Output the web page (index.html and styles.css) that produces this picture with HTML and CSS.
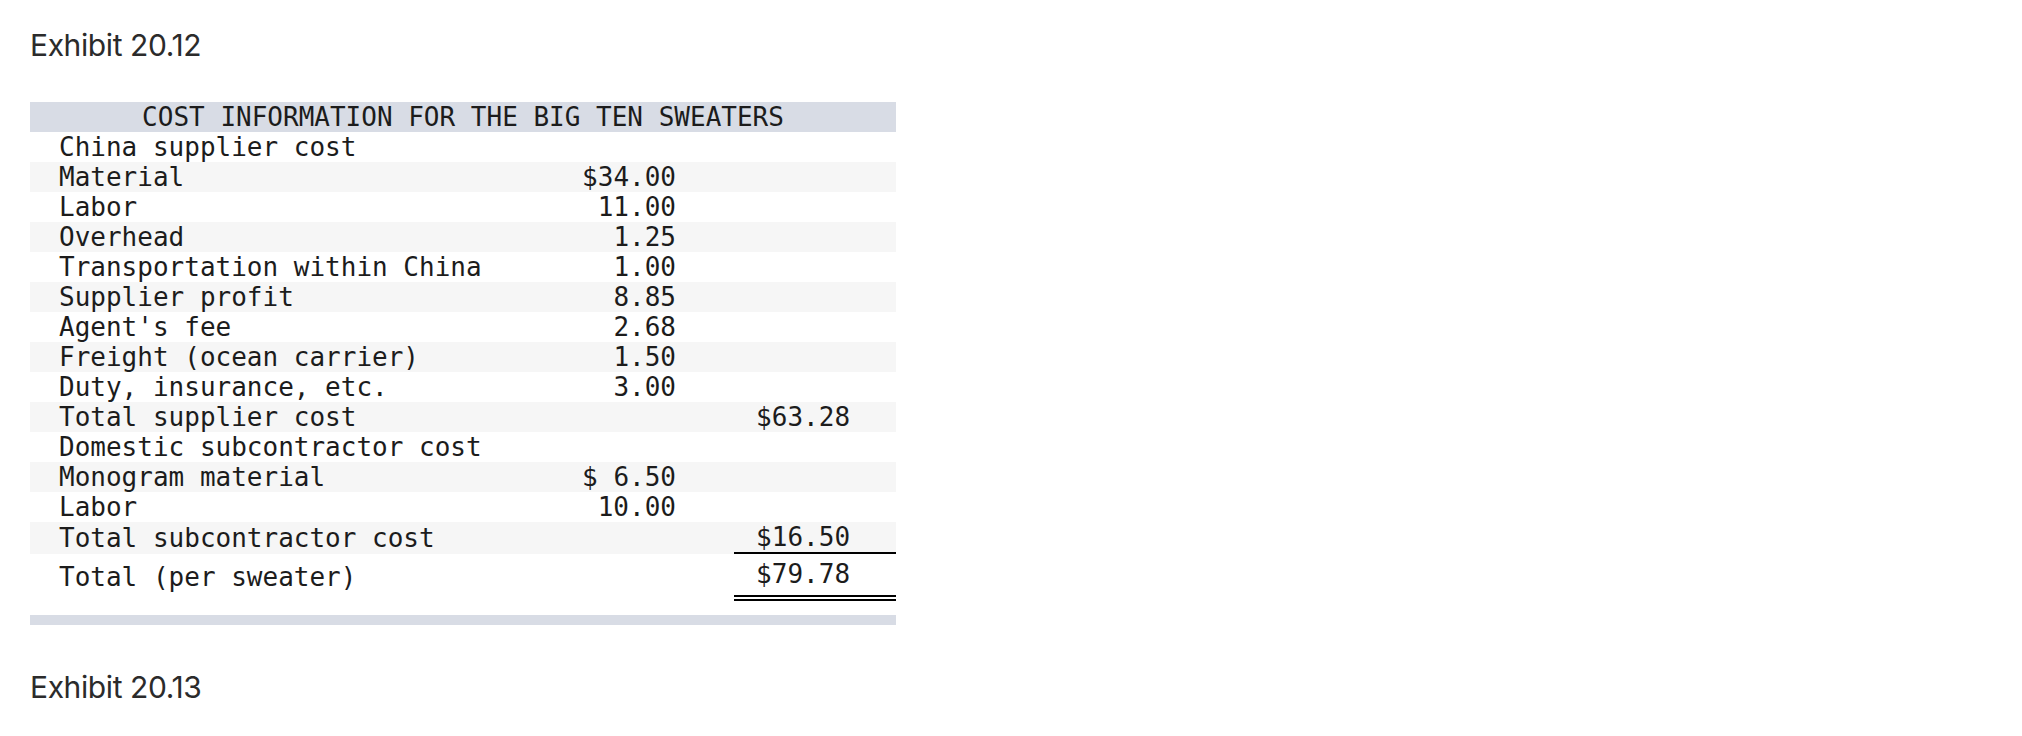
FILE: index.html
```html
<!DOCTYPE html>
<html lang="en">
<head>
<meta charset="utf-8">
<title>Exhibit 20.12</title>
<link rel="stylesheet" href="styles.css">
</head>
<body>
<div class="page">
  <h2 class="exhibit">Exhibit 20.12</h2>
  <table class="cost">
    <colgroup>
      <col class="c-label">
      <col class="c-amt">
      <col class="c-tot">
    </colgroup>
    <thead>
      <tr class="head"><th colspan="3">COST INFORMATION FOR THE BIG TEN SWEATERS</th></tr>
    </thead>
    <tbody>
      <tr><td class="label">China supplier cost</td><td class="amt"></td><td class="tot"></td></tr>
      <tr class="alt"><td class="label">Material</td><td class="amt">$34.00</td><td class="tot"></td></tr>
      <tr><td class="label">Labor</td><td class="amt">11.00</td><td class="tot"></td></tr>
      <tr class="alt"><td class="label">Overhead</td><td class="amt">1.25</td><td class="tot"></td></tr>
      <tr><td class="label">Transportation within China</td><td class="amt">1.00</td><td class="tot"></td></tr>
      <tr class="alt"><td class="label">Supplier profit</td><td class="amt">8.85</td><td class="tot"></td></tr>
      <tr><td class="label">Agent's fee</td><td class="amt">2.68</td><td class="tot"></td></tr>
      <tr class="alt"><td class="label">Freight (ocean carrier)</td><td class="amt">1.50</td><td class="tot"></td></tr>
      <tr><td class="label">Duty, insurance, etc.</td><td class="amt">3.00</td><td class="tot"></td></tr>
      <tr class="alt"><td class="label">Total supplier cost</td><td class="amt"></td><td class="tot">$63.28</td></tr>
      <tr><td class="label">Domestic subcontractor cost</td><td class="amt"></td><td class="tot"></td></tr>
      <tr class="alt"><td class="label">Monogram material</td><td class="amt">$&nbsp;6.50</td><td class="tot"></td></tr>
      <tr><td class="label">Labor</td><td class="amt">10.00</td><td class="tot"></td></tr>
      <tr class="alt"><td class="label">Total subcontractor cost</td><td class="amt"></td><td class="tot single">$16.50</td></tr>
      <tr class="grand"><td class="label">Total (per sweater)</td><td class="amt"></td><td class="tot double">$79.78</td></tr>
    </tbody>
  </table>
  <div class="band"></div>
  <h2 class="exhibit next">Exhibit 20.13</h2>
</div>
</body>
</html>
```

FILE: styles.css
```css
html, body {
  margin: 0;
  padding: 0;
  background: #ffffff;
}

.page {
  padding: 25px 0 0 30px;
}

.exhibit {
  margin: 0;
  font-family: Inter, "Liberation Sans", sans-serif;
  font-weight: 400;
  font-size: 30px;
  line-height: 40px;
  color: #2b2b2b;
  letter-spacing: -0.4px;
}

.exhibit.next {
  margin-top: 42px;
}

.cost {
  margin-top: 37px;
  width: 866px;
  border-collapse: separate;
  border-spacing: 0;
  table-layout: fixed;
  font-family: "DejaVu Sans Mono", "Liberation Mono", monospace;
  font-size: 26px;
  color: #1c1c1c;
}

.cost .c-label { width: 504px; }
.cost .c-amt { width: 200px; }
.cost .c-tot { width: 162px; }

.cost th,
.cost td {
  padding: 0;
  height: 30px;
  line-height: 30px;
  white-space: pre;
  font-weight: 400;
  vertical-align: middle;
}

.cost .head th {
  background: #d8dce5;
  text-align: center;
}

.cost tr.alt td {
  background: #f6f6f6;
}

.cost .label {
  padding-left: 29px;
  text-align: left;
}

.cost .amt {
  padding-right: 58px;
  text-align: right;
}

.cost .tot {
  padding-right: 46px;
  text-align: right;
}

.cost .tot.single {
  border-bottom: 2px solid #000000;
}

.cost tr.grand td {
  height: 41px;
  line-height: 41px;
}

.cost .tot.double {
  border-bottom: 6px double #000000;
}

.band {
  width: 866px;
  height: 10px;
  margin-top: 14px;
  background: #d8dce5;
}
```
